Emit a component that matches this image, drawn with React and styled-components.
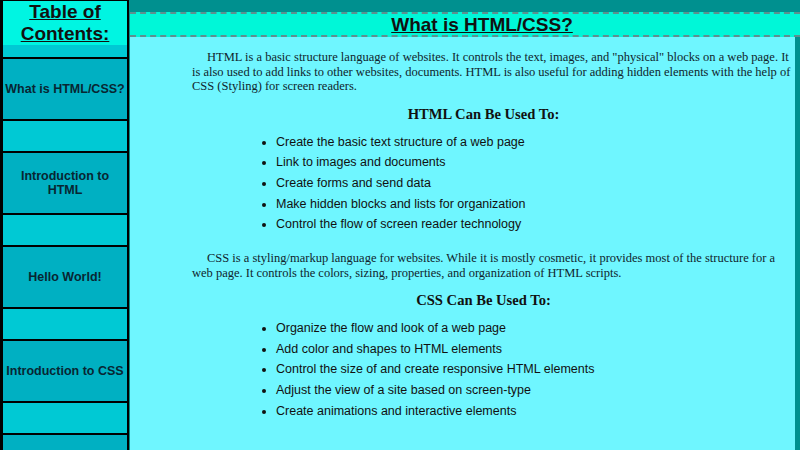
import styled, { createGlobalStyle } from 'styled-components'

const GlobalStyle = createGlobalStyle`
	html, body {
		margin: 0;
		padding: 0;
		background: #00908f;
		overflow: hidden;
	}
`

const tocItems = [
	'What is HTML/CSS?',
	'Introduction to HTML',
	'Hello World!',
	'Introduction to CSS',
	'',
]

const htmlUses = [
	'Create the basic text structure of a web page',
	'Link to images and documents',
	'Create forms and send data',
	'Make hidden blocks and lists for organization',
	'Control the flow of screen reader technology',
]

const cssUses = [
	'Organize the flow and look of a web page',
	'Add color and shapes to HTML elements',
	'Control the size of and create responsive HTML elements',
	'Adjust the view of a site based on screen-type',
	'Create animations and interactive elements',
]

export default function App() {
	return (
		<>
			<GlobalStyle />
			<Page>
				<Sidebar>
					<TitleBox>
						<Title>Table of Contents:</Title>
					</TitleBox>
					{tocItems.map((item, i) => (
						<TocGroup key={i}>
							<NavItem>{item}</NavItem>
							{i < tocItems.length - 1 && <Spacer />}
						</TocGroup>
					))}
				</Sidebar>
				<Main>
					<Header>What is HTML/CSS?</Header>
					<Content>
						<Paragraph>
							HTML is a basic structure language of websites. It controls the
							text, images, and "physical" blocks on a web page. It is also used
							to add links to other websites, documents. HTML is also useful for
							adding hidden elements with the help of CSS (Styling) for screen
							readers.
						</Paragraph>
						<SubHeading>HTML Can Be Used To:</SubHeading>
						<List>
							{htmlUses.map((u) => (
								<li key={u}>{u}</li>
							))}
						</List>
						<Paragraph>
							CSS is a styling/markup language for websites. While it is mostly
							cosmetic, it provides most of the structure for a web page. It
							controls the colors, sizing, properties, and organization of HTML
							scripts.
						</Paragraph>
						<SubHeading>CSS Can Be Used To:</SubHeading>
						<List>
							{cssUses.map((u) => (
								<li key={u}>{u}</li>
							))}
						</List>
					</Content>
				</Main>
			</Page>
		</>
	)
}

const Page = styled.div`
	display: flex;
	height: 450px;
	overflow: hidden;
`

const Sidebar = styled.nav`
	width: 124px;
	flex-shrink: 0;
	background: #000;
	padding: 1px 2px 0 3px;
	display: flex;
	flex-direction: column;
	gap: 2px;
	font-family: 'Liberation Sans', Arial, sans-serif;
`

const TitleBox = styled.div`
	background: #00c9d4;
	padding-bottom: 12px;
`

const Title = styled.h2`
	margin: 0;
	background: #00f5e2;
	color: #111;
	font-size: 19px;
	line-height: 22px;
	text-align: center;
	text-decoration: underline;
	height: 44px;
`

const TocGroup = styled.div`
	display: flex;
	flex-direction: column;
	gap: 2px;
`

const NavItem = styled.a`
	height: 60px;
	background: #00b0c2;
	color: #082632;
	font-size: 12.5px;
	font-weight: bold;
	line-height: 14px;
	display: flex;
	align-items: center;
	justify-content: center;
	text-align: center;
	padding: 0 2px;
	cursor: pointer;
`

const Spacer = styled.div`
	height: 30px;
	background: #00c9d4;
`

const Main = styled.main`
	flex: 1;
	padding-top: 12px;
	display: flex;
	flex-direction: column;
	min-width: 0;
`

const Header = styled.h1`
	margin: 0 0 0 1px;
	background: #00f7d8;
	border-top: 2px dashed #5e8f8f;
	border-bottom: 2px dashed #5e8f8f;
	font-family: 'Liberation Sans', Arial, sans-serif;
	font-size: 19px;
	line-height: 21px;
	color: #111;
	text-align: center;
	text-decoration: underline;
	padding-left: 34px;
`

const Content = styled.section`
	flex: 1;
	margin: 0 5px 0 1px;
	background: #6ff6ff;
	padding: 13px 2px 0 62px;
	font-family: 'Liberation Serif', 'Times New Roman', serif;
	font-size: 12.5px;
	color: #10252d;
`

const Paragraph = styled.p`
	margin: 0;
	text-indent: 15px;
	line-height: 14.5px;
`

const SubHeading = styled.h3`
	margin: 12px 0 9px;
	font-size: 14.6px;
	line-height: 17px;
	color: #111;
	text-align: center;
	padding-right: 18px;
`

const List = styled.ul`
	margin: 0 0 16px;
	padding-left: 84px;
	font-family: 'Liberation Sans', Arial, sans-serif;
	color: #111;

	li {
		line-height: 20.7px;
	}
`
